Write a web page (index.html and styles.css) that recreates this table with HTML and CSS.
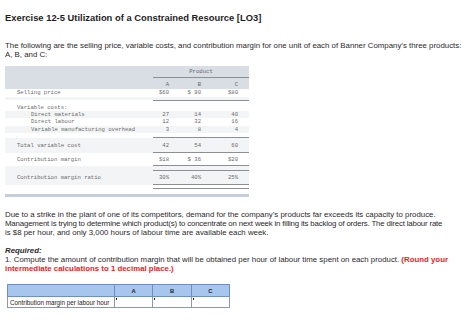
FILE: index.html
```html
<!DOCTYPE html>
<html>
<head>
<meta charset="utf-8">
<link rel="stylesheet" href="styles.css">
</head>
<body>
<h1 class="title">Exercise 12-5 Utilization of a Constrained Resource [LO3]</h1>
<p class="para intro">The following are the selling price, variable costs, and contribution margin for one unit of each of Banner Company’s three products:<br>A, B, and C:</p>

<div class="exhibit">
  <table class="data">
    <colgroup><col class="c-label"><col class="c-a"><col class="c-b"><col class="c-c"></colgroup>
    <tr class="h1"><td class="lbl"></td><td class="num prod" colspan="3">Product</td></tr>
    <tr class="h2"><td class="lbl"></td><td class="num">A</td><td class="num">B</td><td class="num">C</td></tr>
    <tr class="r sp"><td class="lbl">Selling price</td><td class="num">$60</td><td class="num">$ 90</td><td class="num">$80</td></tr>
    <tr class="gap g1 stripe"><td class="lbl"></td><td class="num ul"></td><td class="num ul"></td><td class="num ul"></td></tr>
    <tr class="r vc"><td class="lbl">Variable costs:</td><td class="num"></td><td class="num"></td><td class="num"></td></tr>
    <tr class="r sub stripe"><td class="lbl ind">Direct materials</td><td class="num">27</td><td class="num">14</td><td class="num">40</td></tr>
    <tr class="r sub"><td class="lbl ind">Direct labour</td><td class="num">12</td><td class="num">32</td><td class="num">16</td></tr>
    <tr class="r sub stripe"><td class="lbl ind">Variable manufacturing overhead</td><td class="num">3</td><td class="num">8</td><td class="num">4</td></tr>
    <tr class="gap g2"><td class="lbl"></td><td class="num ul"></td><td class="num ul"></td><td class="num ul"></td></tr>
    <tr class="r tot stripe"><td class="lbl">Total variable cost</td><td class="num ul">42</td><td class="num ul">54</td><td class="num ul">60</td></tr>
    <tr class="r cm"><td class="lbl">Contribution margin</td><td class="num ul">$18</td><td class="num ul">$ 36</td><td class="num ul">$20</td></tr>
    <tr class="gap g3 stripe"><td class="lbl"></td><td class="num ul"></td><td class="num ul"></td><td class="num ul"></td></tr>
    <tr class="r ratio stripe"><td class="lbl">Contribution margin ratio</td><td class="num ul">30%</td><td class="num ul">40%</td><td class="num ul">25%</td></tr>
    <tr class="gap g4"><td class="lbl"></td><td class="num ul"></td><td class="num ul"></td><td class="num ul"></td></tr>
    <tr class="gap g5"><td class="lbl"></td><td class="num"></td><td class="num"></td><td class="num"></td></tr>
  </table>
  <div class="bar"></div>
</div>

<p class="para p2">Due to a strike in the plant of one of its competitors, demand for the company’s products far exceeds its capacity to produce.<br><span class="tight">Management is trying to determine which product(s) to concentrate on next week in filling its backlog of orders. The direct labour rate</span><br>is $8 per hour, and only 3,000 hours of labour time are available each week.</p>

<p class="para req"><span class="req-h">Required:</span><br>1. Compute the amount of contribution margin that will be obtained per hour of labour time spent on each product. <span class="red">(Round your<br>intermediate calculations to 1 decimal place.)</span></p>

<table class="answer">
  <tr class="ah"><th class="al"></th><th>A</th><th>B</th><th>C</th></tr>
  <tr class="ar"><td class="al">Contribution margin per labour hour</td><td class="inp"></td><td class="inp"></td><td class="inp"></td></tr>
</table>
</body>
</html>
```

FILE: styles.css
```css
html, body { margin: 0; padding: 0; background: #fff; }
body { padding: 0 5px; font-family: "Liberation Sans", Arial, sans-serif; color: #222; }

.title {
  margin: 12px 0 0;
  font-size: 9.4px;
  line-height: 12px;
  font-weight: bold;
  color: #1e1e1e;
}

.para {
  margin: 0;
  font-size: 7.85px;
  line-height: 9px;
  color: #2a2a2a;
  white-space: nowrap;
}
.tight { letter-spacing: -0.17px; }
.intro { margin-top: 16.5px; }

.exhibit { margin-top: 7.5px; width: 244px; }

.data {
  border-collapse: collapse;
  width: 244px;
  table-layout: fixed;
  font-family: "Liberation Mono", "Courier New", monospace;
  font-size: 5.6px;
  color: #6a6a6a;
}
.c-label { width: 148px; }
.c-a { width: 32px; }
.c-b { width: 32px; }
.c-c { width: 32px; }
.data td { padding: 0; line-height: 7px; white-space: nowrap; }
.data .lbl { padding-left: 12px; }
.data .lbl.ind { padding-left: 26px; }
.data .num { text-align: right; }
.data tr td:nth-child(2) { padding-right: 16px; }
.data tr td:nth-child(3) { padding-right: 16px; }
.data tr td:nth-child(4) { padding-right: 11px; }

.h1 td, .h2 td { background: #d9dde4; }
.h1 td { height: 11px; }
.h1 .prod { text-align: center; padding: 0 !important; border-bottom: 1.5px solid #8c8f94; }
.h2 td { height: 10px; vertical-align: bottom; padding-bottom: 0.5px; }
.h2 td:nth-child(2) { padding-right: 18px; }
.h2 td:nth-child(3) { padding-right: 18px; }
.h2 td:nth-child(4) { padding-right: 13px; }

.sp td { height: 8px; }
.stripe td { background: #f3f4f6; }
.g1 td { height: 3px; }
.ul { border-bottom: 1px solid #8c8f94; }
.vc td { height: 10px; vertical-align: bottom; }
.sub td { height: 7.5px; }
.g2 td { height: 4px; }
.tot td { height: 14px; }
.cm td { height: 12px; }
.g3 td { height: 4px; }
.ratio td { height: 13px; }
.g4 td { height: 3px; }
.g5 td { height: 5px; }

.bar { height: 3px; background: #c6cedb; }

.p2 { margin-top: 12.5px; }
.req { margin-top: 9px; }
.req-h { font-weight: bold; font-style: italic; }
.red { color: #e3241f; font-weight: bold; }

.answer {
  margin: 11.5px 0 0 2px;
  border-collapse: collapse;
  table-layout: fixed;
  width: 223px;
  font-size: 6px;
}
.answer th, .answer td { border: 1px solid #6f8fbf; padding: 0; }
.answer .ah th { background: #a7c6ee; height: 11px; font-weight: bold; color: #222; font-size: 5.8px; }
.answer th.al, .answer td.al { width: 106px; }
.answer .ar td { height: 10px; background: #fff; border-color: #8c99ad; }
.answer td.al { color: #222; padding-left: 2px; white-space: nowrap; font-size: 6.3px; }
.answer td.inp { position: relative; }
.answer td.inp::before {
  content: "";
  position: absolute;
  left: 1px;
  top: 1px;
  width: 1px;
  height: 2px;
  background: #222;
}
```
